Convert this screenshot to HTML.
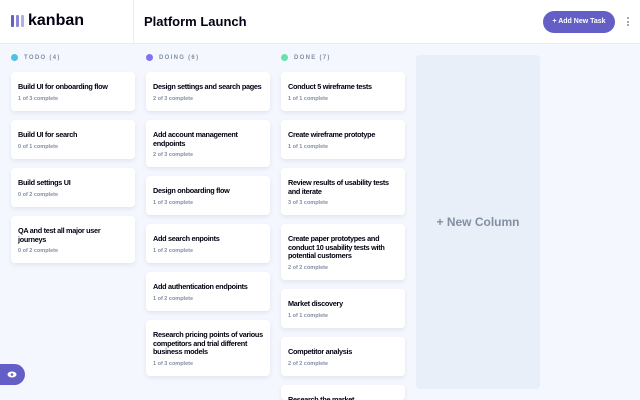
<!DOCTYPE html>
<html><head><meta charset="utf-8"><style>
*{margin:0;padding:0;box-sizing:border-box}
html,body{width:640px;height:400px;overflow:hidden}
body{background:#f4f7fd;font-family:"Liberation Sans",sans-serif;position:relative}
.hdr{position:absolute;left:0;top:0;width:640px;height:44px;background:#fff;border-bottom:1px solid #e4ebfa}
.side{position:absolute;left:133px;top:0;width:1px;height:44px;background:#e4ebfa}
.logo{position:absolute;left:11px;top:15px;display:flex;gap:2px}
.logo i{display:block;width:3px;height:12px;background:#635fc7;border-radius:1px}
.logo i:nth-child(2){opacity:.75}.logo i:nth-child(3){opacity:.5}
.brand{position:absolute;left:28px;top:12px;font-size:16px;font-weight:bold;color:#000112}
.title{position:absolute;left:144px;top:14px;font-size:13px;font-weight:bold;color:#000112}
.btn{position:absolute;left:543px;top:11px;width:72px;height:22px;border-radius:11px;background:#635fc7;color:#fff;font-size:7px;font-weight:bold;text-align:center;line-height:22px}
.dots{position:absolute;left:627px;top:17px;width:2px}
.dots b{display:block;width:2px;height:2px;background:#828fa3;border-radius:1px;margin-bottom:1.5px}
.ch{position:absolute;top:54px;font-size:6px;letter-spacing:1.3px;color:#828fa3;font-weight:bold;display:flex;align-items:center}
.ch span{width:7px;height:7px;border-radius:50%;margin-right:6px;display:inline-block}
.card{position:absolute;width:124px;background:#fff;border-radius:4px;box-shadow:0 2px 4px rgba(54,78,126,.1);padding:11px 7px 0 7px;overflow:hidden}
.card h3{font-size:7.3px;line-height:8.5px;color:#000112;font-weight:bold;letter-spacing:-0.3px}
.card p{font-size:5.5px;color:#828fa3;font-weight:bold;margin-top:4px}
.newcol{position:absolute;left:416px;top:55px;width:124px;height:334px;background:#e9eff9;border-radius:4px;color:#828fa3;font-size:12px;font-weight:bold;text-align:center;line-height:334px}
.eye{position:absolute;left:0;top:364px;width:25px;height:21px;background:#635fc7;border-radius:0 11px 11px 0}
</style></head><body>
<div class="hdr"></div><div class="side"></div>
<div class="logo"><i></i><i></i><i></i></div>
<div class="brand">kanban</div>
<div class="title">Platform Launch</div>
<div class="btn">+ Add New Task</div>
<div class="dots"><b></b><b></b><b></b></div>

<div class="ch" style="left:11px"><span style="background:#49c4e5"></span>TODO (4)</div>
<div class="ch" style="left:146px"><span style="background:#8471f2"></span>DOING (6)</div>
<div class="ch" style="left:281px"><span style="background:#67e2ae"></span>DONE (7)</div>

<div class="card" style="left:11px;top:72px;height:39px"><h3>Build UI for onboarding flow</h3><p>1 of 3 complete</p></div>
<div class="card" style="left:11px;top:120px;height:39px"><h3>Build UI for search</h3><p>0 of 1 complete</p></div>
<div class="card" style="left:11px;top:168px;height:39px"><h3>Build settings UI</h3><p>0 of 2 complete</p></div>
<div class="card" style="left:11px;top:216px;height:47px"><h3>QA and test all major user journeys</h3><p>0 of 2 complete</p></div>

<div class="card" style="left:146px;top:72px;height:39px"><h3>Design settings and search pages</h3><p>2 of 3 complete</p></div>
<div class="card" style="left:146px;top:120px;height:47px"><h3>Add account management endpoints</h3><p>2 of 3 complete</p></div>
<div class="card" style="left:146px;top:176px;height:39px"><h3>Design onboarding flow</h3><p>1 of 3 complete</p></div>
<div class="card" style="left:146px;top:224px;height:39px"><h3>Add search enpoints</h3><p>1 of 2 complete</p></div>
<div class="card" style="left:146px;top:272px;height:39px"><h3>Add authentication endpoints</h3><p>1 of 2 complete</p></div>
<div class="card" style="left:146px;top:320px;height:56px"><h3>Research pricing points of various competitors and trial different business models</h3><p>1 of 3 complete</p></div>

<div class="card" style="left:281px;top:72px;height:39px"><h3>Conduct 5 wireframe tests</h3><p>1 of 1 complete</p></div>
<div class="card" style="left:281px;top:120px;height:39px"><h3>Create wireframe prototype</h3><p>1 of 1 complete</p></div>
<div class="card" style="left:281px;top:168px;height:47px"><h3>Review results of usability tests and iterate</h3><p>3 of 3 complete</p></div>
<div class="card" style="left:281px;top:224px;height:56px"><h3>Create paper prototypes and conduct 10 usability tests with potential customers</h3><p>2 of 2 complete</p></div>
<div class="card" style="left:281px;top:289px;height:39px"><h3>Market discovery</h3><p>1 of 1 complete</p></div>
<div class="card" style="left:281px;top:337px;height:39px"><h3>Competitor analysis</h3><p>2 of 2 complete</p></div>
<div class="card" style="left:281px;top:385px;height:15px"><h3>Research the market</h3></div>

<div class="newcol">+ New Column</div>
<div class="eye"><svg width="25" height="21" viewBox="0 0 25 21"><ellipse cx="12" cy="10.5" rx="4.5" ry="3" fill="#fff"/><circle cx="12" cy="10.5" r="1.3" fill="#635fc7"/></svg></div>
</body></html>
